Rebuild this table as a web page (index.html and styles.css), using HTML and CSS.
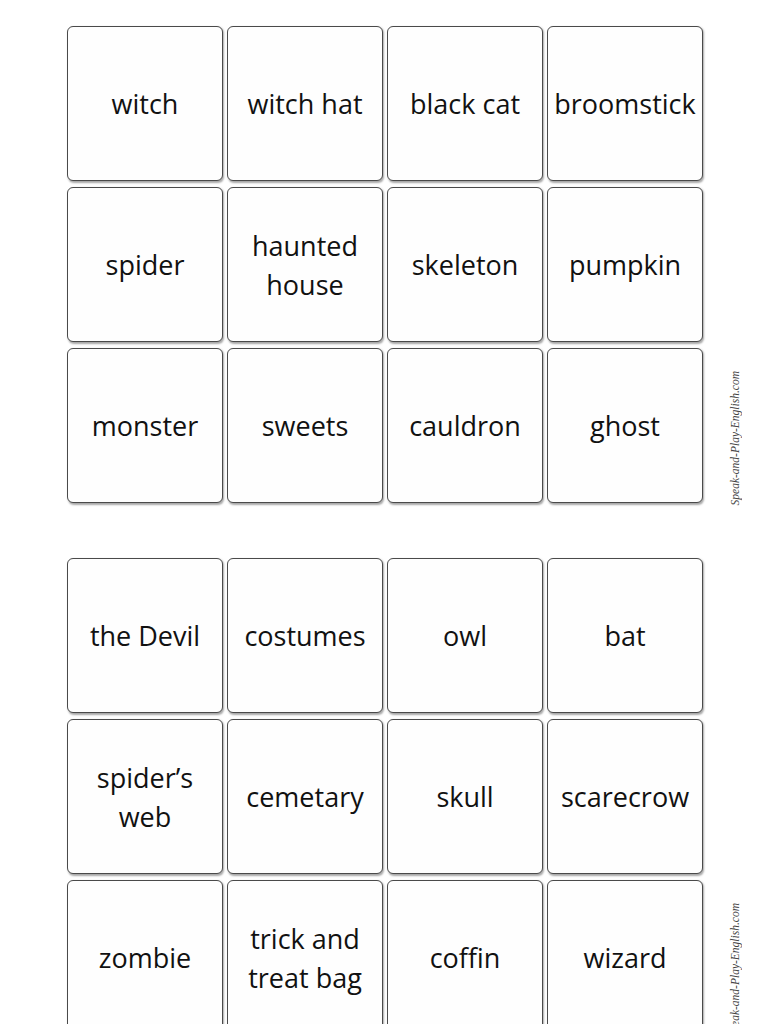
FILE: index.html
```html
<!DOCTYPE html>
<html>
<head>
<meta charset="utf-8">
<link rel="stylesheet" href="styles.css">
</head>
<body>
<div class="page">
  <section class="sheet">
    <div class="grid">
      <div class="card">witch</div>
      <div class="card">witch hat</div>
      <div class="card">black cat</div>
      <div class="card">broomstick</div>
      <div class="card">spider</div>
      <div class="card">haunted<br>house</div>
      <div class="card">skeleton</div>
      <div class="card">pumpkin</div>
      <div class="card">monster</div>
      <div class="card">sweets</div>
      <div class="card">cauldron</div>
      <div class="card">ghost</div>
    </div>
    <div class="side"><span class="credit">Speak-and-Play-English.com</span></div>
  </section>
  <section class="sheet">
    <div class="grid">
      <div class="card">the Devil</div>
      <div class="card">costumes</div>
      <div class="card">owl</div>
      <div class="card">bat</div>
      <div class="card">spider’s<br>web</div>
      <div class="card">cemetary</div>
      <div class="card">skull</div>
      <div class="card">scarecrow</div>
      <div class="card">zombie</div>
      <div class="card">trick and<br>treat bag</div>
      <div class="card">coffin</div>
      <div class="card">wizard</div>
    </div>
    <div class="side"><span class="credit">Speak-and-Play-English.com</span></div>
  </section>
</div>
</body>
</html>
```

FILE: styles.css
```css
html, body {
  margin: 0;
  padding: 0;
  background: #ffffff;
}
body {
  width: 768px;
  height: 1024px;
  overflow: hidden;
}
.page {
  padding: 26px 0 0 67px;
  display: flex;
  flex-direction: column;
  gap: 55px;
}
.sheet {
  display: flex;
  align-items: flex-end;
  gap: 26px;
}
.grid {
  display: grid;
  grid-template-columns: repeat(4, 156px);
  grid-auto-rows: 155px;
  column-gap: 4px;
  row-gap: 6px;
}
.card {
  box-sizing: border-box;
  border: 1.5px solid #4a4a4a;
  border-radius: 6px;
  background: #fefefe;
  box-shadow: 1px 1.5px 2px rgba(0,0,0,0.35);
  display: flex;
  align-items: center;
  justify-content: center;
  text-align: center;
  font-family: "Open Sans", "Noto Sans", sans-serif;
  font-size: 27px;
  line-height: 39px;
  color: #111;
  letter-spacing: 0;
}
.side {
  width: 12px;
  margin-bottom: -2px;
}
.credit {
  display: block;
  writing-mode: vertical-rl;
  transform: rotate(180deg);
  font-family: "Liberation Serif", serif;
  font-style: italic;
  font-size: 11.5px;
  line-height: 12px;
  color: #444;
  white-space: nowrap;
}
```
